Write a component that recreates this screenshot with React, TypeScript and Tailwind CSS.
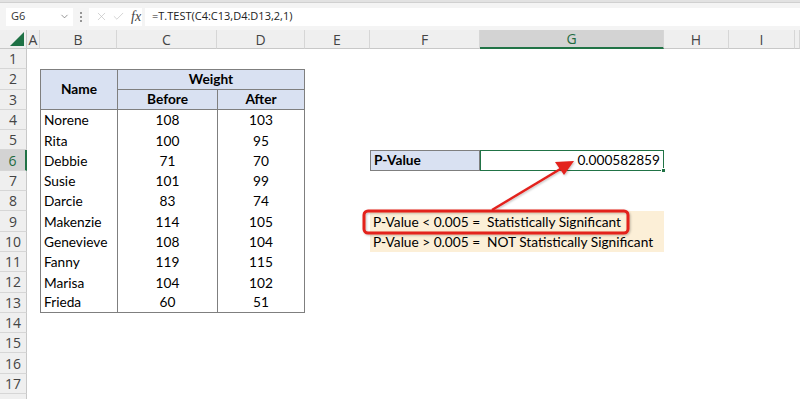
import React from "react";
import { X, Check, ChevronDown } from "lucide-react";

const CELL_FONT = "font-['Lato','Liberation_Sans',sans-serif]";

function RowHead({ n, sel }: { n: number; sel?: boolean }) {
  return (
    <div
      className={
        "flex items-center justify-center text-[14px] font-['Open_Sans',sans-serif] border-b border-[#d6d6d6] " +
        (sel
          ? "bg-[#d3d3d3] text-[#1f6b41] border-r-2 border-r-[#217346]"
          : "bg-[#efefef] text-[#444] border-r border-r-[#c8c8c8]")
      }
    >
      {n < 18 ? n : ""}
    </div>
  );
}

function Blank({ n = 1 }: { n?: number }) {
  return (
    <>
      {Array.from({ length: n }).map((_, i) => (
        <div key={i} />
      ))}
    </>
  );
}

const data: [string, number, number][] = [
  ["Norene", 108, 103],
  ["Rita", 100, 95],
  ["Debbie", 71, 70],
  ["Susie", 101, 99],
  ["Darcie", 83, 74],
  ["Makenzie", 114, 105],
  ["Genevieve", 108, 104],
  ["Fanny", 119, 115],
  ["Marisa", 104, 102],
  ["Frieda", 60, 51],
];

export default function App() {
  const B = "border-[#7f7f7f]";
  return (
    <div className="relative w-[800px] h-[399px] overflow-hidden bg-white text-[#000]">
      {/* top strip */}
      <div className="h-[3px] bg-[#e2e2e2] border-b border-[#d0d0d0]" />
      {/* formula bar */}
      <div className="h-[27px] bg-[#f4f4f4] flex items-center pl-[6px] gap-0">
        <div className="w-[67px] h-[18px] bg-white flex items-center justify-between pl-[5px] pr-[3px] text-[11px] font-['Open_Sans',sans-serif] text-[#333]">
          <span>G6</span>
          <ChevronDown size={11} strokeWidth={1.5} className="text-[#666]" />
        </div>
        <div className="w-[16px] flex justify-center">
          <div className="flex flex-col gap-[2px]">
            <span className="w-[2px] h-[2px] bg-[#777] rounded-full" />
            <span className="w-[2px] h-[2px] bg-[#777] rounded-full" />
            <span className="w-[2px] h-[2px] bg-[#777] rounded-full" />
          </div>
        </div>
        <div className="h-[18px] w-[53px] bg-white flex items-center gap-[4px] pl-[6px]">
          <X size={13} strokeWidth={1.2} className="text-[#bdbdbd]" />
          <Check size={13} strokeWidth={1.2} className="text-[#bdbdbd]" />
          <span className="font-['Liberation_Serif',serif] italic text-[14px] text-[#444] leading-none ml-[2px]">
            fx
          </span>
        </div>
        <div className="ml-[3px] flex-1 h-[18px] bg-white flex items-center pl-[7px] text-[11px] font-['Open_Sans',sans-serif] text-[#222]">
          =T.TEST(C4:C13,D4:D13,2,1)
        </div>
      </div>

      {/* sheet grid */}
      <div
        className={
          "grid grid-cols-[27px_13px_77px_100px_88px_65px_110px_184px_65px_66px_5px] grid-rows-[19px_repeat(18,20.3px)] " +
          CELL_FONT +
          " text-[13.7px]"
        }
      >
        {/* column header */}
        <div className="bg-[#efefef] border-r border-b border-[#c8c8c8] relative">
          <svg className="absolute right-[2px] bottom-[2px]" width="14" height="14" viewBox="0 0 14 14">
            <polygon points="14,0 14,14 0,14" fill="#1e7145" />
          </svg>
        </div>
        {["A", "B", "C", "D", "E", "F", "G", "H", "I", ""].map((c) => (
          <div
            key={c || "J"}
            className={
              "flex items-center justify-center text-[14px] font-['Open_Sans',sans-serif] border-r border-r-[#d6d6d6] " +
              (c === "G"
                ? "bg-[#d3d3d3] text-[#1f6b41] border-b-2 border-b-[#217346]"
                : "bg-[#efefef] text-[#444] border-b border-b-[#c8c8c8]")
            }
          >
            {c}
          </div>
        ))}

        {/* row 1 */}
        <RowHead n={1} />
        <Blank n={10} />

        {/* row 2 */}
        <RowHead n={2} />
        <Blank />
        <div className={"row-span-2 bg-[#d9e1f2] border-l border-t border-b font-bold flex items-center justify-center " + B}>
          Name
        </div>
        <div className={"col-span-2 bg-[#d9e1f2] border-l border-t border-r border-b font-bold flex items-center justify-center " + B}>
          Weight
        </div>
        <Blank n={6} />

        {/* row 3 */}
        <RowHead n={3} />
        <Blank />
        <div className={"bg-[#d9e1f2] border-l border-b font-bold flex items-center justify-center " + B}>Before</div>
        <div className={"bg-[#d9e1f2] border-l border-r border-b font-bold flex items-center justify-center " + B}>After</div>
        <Blank n={6} />

        {data.map(([name, b, a], i) => {
          const r = i + 4;
          const last = r === 13;
          const bb = last ? " border-b" : "";
          return (
            <React.Fragment key={r}>
              <RowHead n={r} sel={r === 6} />
              <Blank />
              <div className={"border-l flex items-center pl-[3px] pt-[1px] " + B + bb}>{name}</div>
              <div className={"border-l flex items-center justify-center pt-[1px] " + B + bb}>{b}</div>
              <div className={"border-l border-r flex items-center justify-center pt-[1px] " + B + bb}>{a}</div>
              <Blank />
              {r === 6 ? (
                <>
                  <div className={"bg-[#d9e1f2] border font-bold flex items-center pl-[3px] " + B}>P-Value</div>
                  <div className="relative border border-[#217346] flex items-center justify-end pr-[3px]">
                    0.000582859
                    <span className="absolute right-[-3px] bottom-[-3px] w-[5px] h-[5px] bg-[#217346] border border-white" />
                  </div>
                  <Blank n={3} />
                </>
              ) : r === 9 || r === 10 ? (
                <>
                  <div className="col-span-2 bg-[#fcefd7] flex items-center pl-[3px] pt-[1px] whitespace-pre">
                    {r === 9
                      ? "P-Value < 0.005 =  Statistically Significant"
                      : "P-Value > 0.005 =  NOT Statistically Significant"}
                  </div>
                  <Blank n={3} />
                </>
              ) : (
                <Blank n={5} />
              )}
            </React.Fragment>
          );
        })}

        {[14, 15, 16, 17, 18].map((r) => (
          <React.Fragment key={r}>
            <RowHead n={r} />
            <Blank n={10} />
          </React.Fragment>
        ))}
      </div>

      {/* annotation overlay */}
      <svg className="absolute left-0 top-0 pointer-events-none" width="800" height="399" viewBox="0 0 800 399">
        <defs>
          <filter id="sh" x="-10%" y="-10%" width="120%" height="120%">
            <feDropShadow dx="1" dy="1" stdDeviation="1" floodColor="#000" floodOpacity="0.25" />
          </filter>
        </defs>
        <g filter="url(#sh)">
          <rect x="364" y="211" width="264" height="22" rx="4" fill="none" stroke="#e3201b" strokeWidth="3" />
          <line x1="492" y1="210" x2="562" y2="168" stroke="#e3201b" strokeWidth="2.5" />
          <polygon points="574,161 555,162 564,175" fill="#e3201b" />
        </g>
      </svg>
    </div>
  );
}
